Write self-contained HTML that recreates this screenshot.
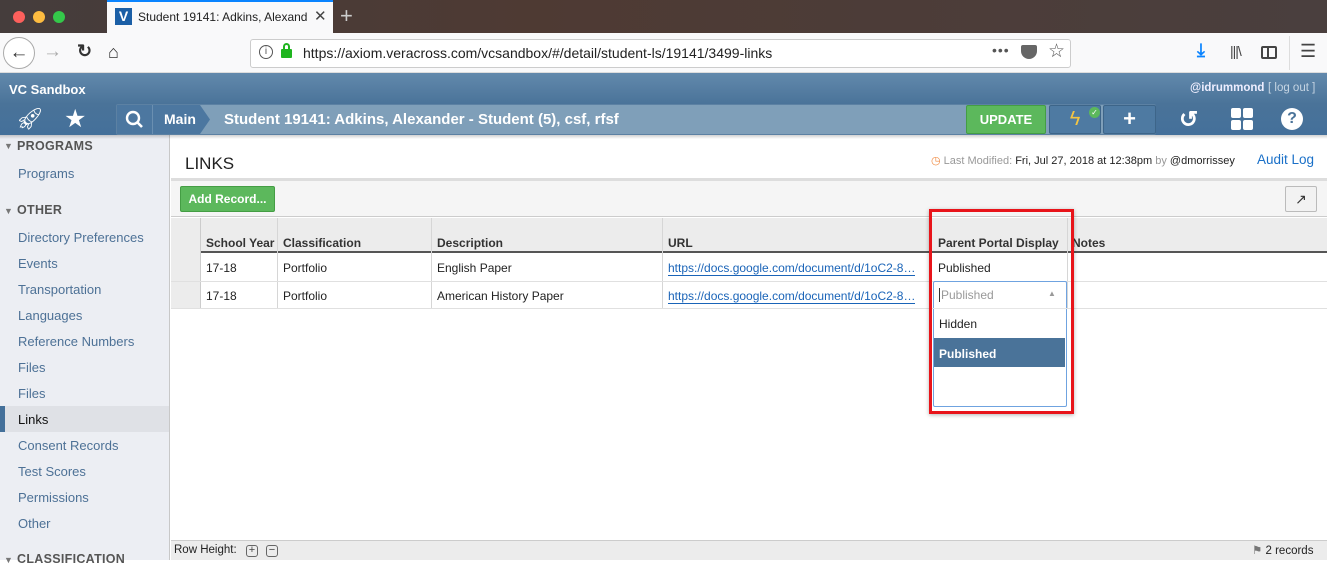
<!DOCTYPE html>
<html><head><meta charset="utf-8"><style>
*{box-sizing:border-box;margin:0;padding:0}
body{width:1327px;height:560px;overflow:hidden;font-family:"Liberation Sans",sans-serif;font-size:12px;position:relative;background:#fff}
.a{position:absolute}
.tabbar{left:0;top:0;width:1327px;height:33px;background:linear-gradient(90deg,#453d3c,#4e3a33 40%,#4a3f3e)}
.tab{left:107px;top:0;width:226px;height:33px;background:#f9f9fa;border-top:2px solid #0a84ff}
.tb{left:0;top:33px;width:1327px;height:40px;background:#f9f9fa;border-bottom:1px solid #ddd}
.url{left:250px;top:39px;width:821px;height:29px;background:#fff;border:1px solid #ccc;border-radius:3px}
.hdr{left:0;top:73px;width:1327px;height:62px;background:linear-gradient(#6289ac,#4a7399 50%,#44709a)}
.crumb{left:116px;top:104px;width:1040px;height:31px;background:#7f9fb9;border:1px solid #5c81a3;border-radius:2px}
.side{left:0;top:135px;width:170px;height:425px;background:#eceef3;border-right:1px solid #c8c8c8}
.si{position:absolute;left:18px;font-size:13px;color:#4d7196}
.sh{position:absolute;left:17px;font-size:12.5px;font-weight:bold;color:#555;letter-spacing:.3px}
.tri{position:absolute;left:4px;font-size:9px;color:#777}
.btn{position:absolute;top:105px;height:29px;border:1px solid #3d6589;border-radius:2px;background:#4e7aa2;color:#fff;text-align:center}
.cell{position:absolute;font-size:12px;color:#222;white-space:nowrap}
.hc{position:absolute;top:236px;font-size:12px;font-weight:bold;color:#333}
.vl{position:absolute;width:1px;background:#d6d6d6}
.lnk{color:#1a64b8;border-bottom:1px solid #1a64b8}
</style></head><body>
<div class="a tabbar"></div>
<div class="a" style="left:13px;top:11px;width:12px;height:12px;border-radius:6px;background:#fc605c"></div>
<div class="a" style="left:33px;top:11px;width:12px;height:12px;border-radius:6px;background:#fdbc40"></div>
<div class="a" style="left:53px;top:11px;width:12px;height:12px;border-radius:6px;background:#34c84a"></div>
<div class="a tab"></div>
<div class="a" style="left:115px;top:8px;width:17px;height:17px;background:#1b5fa6;color:#fff;font-weight:bold;font-size:14px;text-align:center;line-height:17px">V</div>
<div class="a" style="left:138px;top:10px;font-size:12px;color:#222;width:170px;overflow:hidden;white-space:nowrap">Student 19141: Adkins, Alexander</div>
<div class="a" style="left:314px;top:7px;font-size:15px;color:#444">✕</div>
<div class="a" style="left:340px;top:3px;font-size:22px;color:#ccc">+</div>
<div class="a tb"></div>
<div class="a" style="left:3px;top:37px;width:32px;height:32px;border:1px solid #aaa;border-radius:16px;background:#fff;font-size:19px;text-align:center;line-height:29px;color:#333">←</div>
<div class="a" style="left:43px;top:41px;font-size:19px;color:#aaa">→</div>
<div class="a" style="left:77px;top:41px;font-size:18px;color:#333;font-weight:bold">↻</div>
<div class="a" style="left:108px;top:42px;font-size:18px;color:#333">⌂</div>
<div class="a url"></div>
<div class="a" style="left:259px;top:45px;width:14px;height:14px;border:1.5px solid #555;border-radius:7px;font-size:10px;text-align:center;line-height:11px;color:#555">i</div>
<div class="a" style="left:281px;top:49px;width:11px;height:9px;background:#1fb51f;border-radius:1px"></div>
<div class="a" style="left:283px;top:43px;width:7px;height:8px;border:2px solid #1fb51f;border-bottom:none;border-radius:4px 4px 0 0"></div>
<div class="a" style="left:303px;top:45px;font-size:14px;color:#222">https://axiom.veracross.com/vcsandbox/#/detail/student-ls/19141/3499-links</div>
<div class="a" style="left:992px;top:42px;font-size:14px;color:#555;letter-spacing:1px">•••</div>
<div class="a" style="left:1021px;top:45px;width:16px;height:14px;background:#666;border-radius:2px 2px 8px 8px"></div>
<div class="a" style="left:1048px;top:40px;font-size:19px;color:#555">☆</div>
<div class="a" style="left:1197px;top:40px;font-size:18px;color:#0a84ff;font-weight:bold">⤓</div>
<div class="a" style="left:1230px;top:43px;font-size:14px;color:#444;letter-spacing:-1px">|||\</div>
<div class="a" style="left:1261px;top:46px;width:16px;height:13px;border:2px solid #444;border-radius:2px"></div>
<div class="a" style="left:1267px;top:46px;width:2px;height:13px;background:#444"></div>
<div class="a" style="left:1289px;top:36px;width:1px;height:34px;background:#ddd"></div>
<div class="a" style="left:1300px;top:41px;font-size:18px;color:#444">☰</div>
<div class="a hdr"></div>
<div class="a" style="left:9px;top:82px;font-size:13px;font-weight:bold;color:#fff">VC Sandbox</div>
<div class="a" style="left:1190px;top:82px;font-size:11.5px;font-weight:bold;color:#eef">@idrummond</div>
<div class="a" style="left:1268px;top:82px;font-size:11.5px;color:#c6d5e3">[ log out ]</div>
<div class="a" style="left:16px;top:106px;font-size:22px;color:#fff">🚀︎</div>
<div class="a" style="left:64px;top:104px;font-size:25px;color:#fff">★</div>
<div class="a crumb"></div>
<div class="a" style="left:117px;top:105px;width:36px;height:29px;background:#4c77a0;border-right:1px solid #6a8fb1"></div>
<svg class="a" style="left:125px;top:110px" width="20" height="20"><circle cx="8" cy="8" r="6" stroke="#fff" stroke-width="2.4" fill="none"/><line x1="12" y1="12" x2="17" y2="17" stroke="#fff" stroke-width="2.6"/></svg>
<svg class="a" style="left:153px;top:105px" width="60" height="29"><polygon points="0,0 47,0 57,14.5 47,29 0,29" fill="#4c77a0"/></svg>
<div class="a" style="left:164px;top:111px;font-size:14px;font-weight:bold;color:#fff">Main</div>
<div class="a" style="left:224px;top:111px;font-size:15px;font-weight:bold;color:#fff">Student 19141: Adkins, Alexander - Student (5), csf, rfsf</div>
<div class="btn" style="left:966px;width:80px;background:#5cb85c;border-color:#449d44;font-weight:bold;font-size:13px;line-height:27px">UPDATE</div>
<div class="btn" style="left:1049px;width:52px;color:#f5c542;font-size:20px;line-height:27px">ϟ</div>
<div class="a" style="left:1089px;top:107px;width:11px;height:11px;border-radius:6px;background:#5cb85c;color:#fff;font-size:8px;text-align:center;line-height:11px">✓</div>
<div class="btn" style="left:1103px;width:53px;font-size:22px;font-weight:bold;line-height:25px">+</div>
<div class="a" style="left:1179px;top:106px;font-size:23px;color:#fff;font-weight:bold">↺</div>
<svg class="a" style="left:1231px;top:108px" width="23" height="23"><rect x="0" y="0" width="10" height="10" rx="2" fill="#fff"/><rect x="12" y="0" width="10" height="10" rx="2" fill="#fff"/><rect x="0" y="12" width="10" height="10" rx="2" fill="#fff"/><rect x="12" y="12" width="10" height="10" rx="2" fill="#fff"/></svg>
<div class="a" style="left:1281px;top:108px;width:22px;height:22px;border-radius:11px;background:#fff;color:#4a7399;font-weight:bold;font-size:16px;text-align:center;line-height:22px">?</div>

<div class="a side">
<div class="tri" style="top:6px">▼</div><div class="sh" style="top:4px">PROGRAMS</div>
<div class="si" style="top:31px">Programs</div>
<div class="tri" style="top:71px">▼</div><div class="sh" style="top:68px">OTHER</div>
<div class="si" style="top:95px">Directory Preferences</div>
<div class="si" style="top:121px">Events</div>
<div class="si" style="top:147px">Transportation</div>
<div class="si" style="top:173px">Languages</div>
<div class="si" style="top:199px">Reference Numbers</div>
<div class="si" style="top:225px">Files</div>
<div class="si" style="top:251px">Files</div>
<div style="position:absolute;left:0;top:271px;width:169px;height:26px;background:#dfe1e6;border-left:5px solid #44709a"></div>
<div class="si" style="top:277px;color:#111">Links</div>
<div class="si" style="top:303px">Consent Records</div>
<div class="si" style="top:329px">Test Scores</div>
<div class="si" style="top:355px">Permissions</div>
<div class="si" style="top:381px">Other</div>
<div class="tri" style="top:420px">▼</div><div class="sh" style="top:417px">CLASSIFICATION</div>
</div>
<div class="a" style="left:0;top:135px;width:1327px;height:4px;background:linear-gradient(rgba(0,0,0,.18),rgba(0,0,0,0))"></div>

<div class="a" style="left:185px;top:154px;font-size:17px;color:#222">LINKS</div>
<div class="a" style="left:931px;top:154px;font-size:11px;color:#999"><span style="color:#f0883e">◷</span> Last Modified: <span style="color:#222">Fri, Jul 27, 2018 at 12:38pm</span> by <span style="color:#222">@dmorrissey</span></div>
<div class="a" style="left:1257px;top:152px;font-size:13.5px;color:#1a70c8">Audit Log</div>
<div class="a" style="left:171px;top:178px;width:1156px;height:3px;background:#ddd"></div>
<div class="a" style="left:171px;top:181px;width:1156px;height:36px;background:#f5f5f5;border-bottom:1px solid #ccc"></div>
<div class="a" style="left:180px;top:186px;width:95px;height:26px;background:#5cb85c;border:1px solid #449d44;border-radius:2px;color:#fff;font-weight:bold;font-size:12px;text-align:center;line-height:24px">Add Record...</div>
<div class="a" style="left:1285px;top:186px;width:32px;height:26px;background:#f2f2f2;border:1px solid #bbb;border-radius:2px;font-size:14px;text-align:center;line-height:24px;color:#333">↗</div>

<div class="a" style="left:171px;top:218px;width:1156px;height:35px;background:#ececec;border-bottom:2px solid #555"></div>
<div class="a" style="left:171px;top:218px;width:30px;height:91px;background:#ececec;border-right:1px solid #ccc"></div>
<div class="vl" style="left:277px;top:218px;height:91px"></div>
<div class="vl" style="left:431px;top:218px;height:91px"></div>
<div class="vl" style="left:662px;top:218px;height:91px"></div>
<div class="vl" style="left:1067px;top:218px;height:91px"></div>
<div class="a" style="left:171px;top:281px;width:1156px;height:1px;background:#e0e0e0"></div>
<div class="a" style="left:171px;top:308px;width:1156px;height:1px;background:#e0e0e0"></div>
<div class="hc" style="left:206px">School Year</div>
<div class="hc" style="left:283px">Classification</div>
<div class="hc" style="left:437px">Description</div>
<div class="hc" style="left:668px">URL</div>
<div class="hc" style="left:938px">Parent Portal Display</div>
<div class="hc" style="left:1072px">Notes</div>
<div class="cell" style="left:206px;top:261px">17-18</div>
<div class="cell" style="left:283px;top:261px">Portfolio</div>
<div class="cell" style="left:437px;top:261px">English Paper</div>
<div class="cell" style="left:668px;top:261px"><span class="lnk">https://docs.google.com/document/d/1oC2-8…</span></div>
<div class="cell" style="left:938px;top:261px">Published</div>
<div class="cell" style="left:206px;top:289px">17-18</div>
<div class="cell" style="left:283px;top:289px">Portfolio</div>
<div class="cell" style="left:437px;top:289px">American History Paper</div>
<div class="cell" style="left:668px;top:289px"><span class="lnk">https://docs.google.com/document/d/1oC2-8…</span></div>

<div class="a" style="left:929px;top:209px;width:145px;height:205px;border:3px solid #e8141a;box-shadow:0 1px 4px rgba(0,0,0,.3)"></div>
<div class="a" style="left:933px;top:281px;width:134px;height:126px;background:#fff;border:1px solid #6fa3e0;border-radius:2px"></div>
<div class="a" style="left:933px;top:308px;width:134px;height:1px;background:#e6e6e6"></div>
<div class="a" style="left:939px;top:288px;font-size:12px;color:#999;border-left:1px solid #333;padding-left:1px">Published</div>
<div class="a" style="left:1048px;top:289px;font-size:8px;color:#999">▲</div>
<div class="a" style="left:939px;top:317px;font-size:12px;color:#222">Hidden</div>
<div class="a" style="left:934px;top:338px;width:131px;height:29px;background:#4a7399"></div>
<div class="a" style="left:939px;top:347px;font-size:12px;color:#fff;font-weight:bold">Published</div>

<div class="a" style="left:171px;top:540px;width:1156px;height:20px;background:#ececec;border-top:1px solid #ccc"></div>
<div class="a" style="left:174px;top:544px;font-size:11.5px;color:#222">Row Height:</div>
<div class="a" style="left:246px;top:545px;width:12px;height:12px;border:1px solid #666;border-radius:3px;font-size:11px;line-height:9px;text-align:center;color:#444">+</div>
<div class="a" style="left:266px;top:545px;width:12px;height:12px;border:1px solid #666;border-radius:3px;font-size:11px;line-height:9px;text-align:center;color:#444">−</div>
<div class="a" style="left:1252px;top:543px;font-size:11.5px;color:#222"><span style="color:#777">⚑</span> 2 records</div>
</body></html>
